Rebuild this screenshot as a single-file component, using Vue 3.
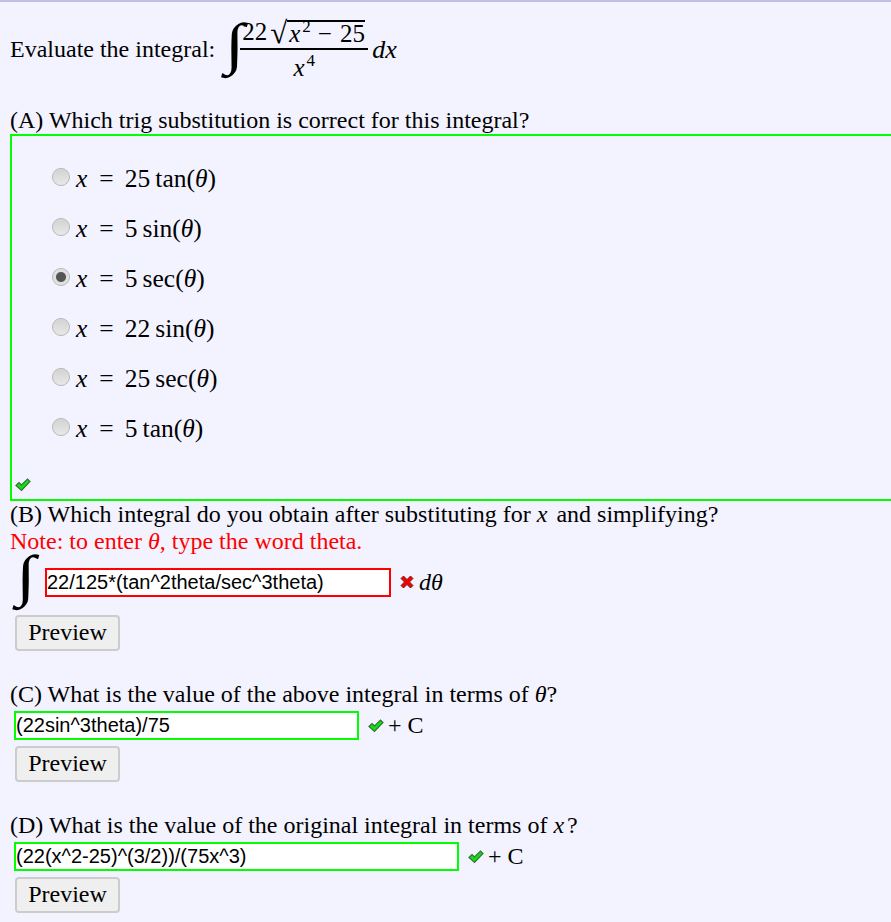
<template>
  <div class="page">
    <div class="intro">
      <span>Evaluate the integral:</span>
      <span class="big-int">∫</span>
      <span class="frac">
        <span class="num">22<span class="radical">√</span><span class="radicand"><i>x</i><sup>2</sup><span class="minus">−</span>25</span></span>
        <span class="den"><i>x</i><sup>4</sup></span>
      </span>
      <span class="dx"><i>dx</i></span>
    </div>

    <div class="q-a">(A) Which trig substitution is correct for this integral?</div>
    <div class="choices">
      <label v-for="c in choices" :key="c.text" class="choice">
        <input type="radio" name="sub" :checked="c.on" />
        <span class="math"><i>x</i><span class="eq">=</span>{{ c.text }}(<i>θ</i>)</span>
      </label>
      <svg class="mark box-mark" viewBox="0 0 16 14"><path :d="checkPath" class="check" /></svg>
    </div>

    <div class="q-b">(B) Which integral do you obtain after substituting for <i class="mi">x</i> and simplifying?</div>
    <div class="note">Note: to enter <i>θ</i>, type the word theta.</div>
    <div class="answer-b">
      <span class="small-int">∫</span>
      <input class="field bad wide-b" value="22/125*(tan^2theta/sec^3theta)" />
      <svg class="mark" viewBox="0 0 14 14"><path :d="crossPath" class="cross" /></svg>
      <span class="tail"><i>dθ</i></span>
    </div>
    <button class="preview">Preview</button>

    <div class="q-c">(C) What is the value of the above integral in terms of <i>θ</i>?</div>
    <div class="answer">
      <input class="field good wide-c" value="(22sin^3theta)/75" />
      <svg class="mark" viewBox="0 0 16 14"><path :d="checkPath" class="check" /></svg>
      <span class="tail">+ C</span>
    </div>
    <button class="preview">Preview</button>

    <div class="q-c">(D) What is the value of the original integral in terms of <i class="mi">x</i>?</div>
    <div class="answer">
      <input class="field good wide-d" value="(22(x^2-25)^(3/2))/(75x^3)" />
      <svg class="mark" viewBox="0 0 16 14"><path :d="checkPath" class="check" /></svg>
      <span class="tail">+ C</span>
    </div>
    <button class="preview">Preview</button>
  </div>
</template>

<script setup>
const choices = [
  { text: '25\u2009tan' },
  { text: '5\u2009sin' },
  { text: '5\u2009sec', on: true },
  { text: '22\u2009sin' },
  { text: '25\u2009sec' },
  { text: '5\u2009tan' }
];

const checkPath = 'M1 7.5 L4 4.5 L6.5 7 L12.5 1 L15 3.5 L6.5 12.5 Z';
const crossPath = 'M1 3.5 L3.5 1 L7 4.5 L10.5 1 L13 3.5 L9.5 7 L13 10.5 L10.5 13 L7 9.5 L3.5 13 L1 10.5 L4.5 7 Z';
</script>

<style>
html, body {
  margin: 0;
  background: #f3f3ff;
  overflow: hidden;
}
</style>

<style scoped>
.page {
  width: 891px;
  height: 922px;
  box-sizing: border-box;
  border-top: 2px solid #bfbfe0;
  padding-left: 10px;
  overflow: hidden;
  font-family: "Liberation Serif", serif;
  font-size: 24px;
  line-height: 27px;
  color: #000;
}

.intro {
  display: flex;
  align-items: center;
  height: 81px;
  padding-top: 14px;
  box-sizing: border-box;
}

.big-int {
  font-size: 62px;
  line-height: 62px;
  width: 16px;
  margin: 0 0 0 9px;
  transform: translate(2px, -6px) scale(1.15, 0.92);
}

.frac {
  display: inline-flex;
  flex-direction: column;
  align-items: center;
  width: 128px;
  font-size: 25px;
}

.num {
  display: flex;
  align-items: flex-end;
  align-self: stretch;
  height: 32px;
  box-sizing: border-box;
  padding: 0 0 3px 2px;
  border-bottom: 2px solid #000;
  margin-bottom: 2px;
}

.radical {
  font-size: 31px;
  line-height: 26px;
  width: 17px;
  margin-left: 3px;
  transform: translateY(1px);
}

.radicand {
  border-top: 2px solid #000;
  line-height: 23px;
  margin-top: -2px;
  padding-left: 2px;
  white-space: nowrap;
}

.radicand sup, .den sup {
  font-size: 17px;
  line-height: 0;
  margin-left: 2px;
}

.minus {
  margin: 0 8px 0 7px;
}

.den {
  line-height: 28px;
  margin-top: 2px;
}

.dx {
  margin-left: 4px;
  font-size: 26px;
}

.q-a {
  margin-top: 24px;
}

.choices {
  width: 1000px;
  height: 367px;
  box-sizing: border-box;
  border: 2px solid #00ff00;
  padding: 16px 0 0 40px;
  position: relative;
}

.choice {
  display: flex;
  align-items: center;
  height: 50px;
}

.choice input {
  appearance: none;
  width: 18px;
  height: 18px;
  margin: 0 6px 0 0;
  border: 1.5px solid #b4b4b4;
  border-radius: 50%;
  background: linear-gradient(#d2d2d2, #e8e8e8);
  box-shadow: inset 0 0 1px #fff;
}

.choice input:checked {
  background: radial-gradient(circle, #555 0, #555 4.5px, #e0e0e0 5.5px);
}

.math {
  font-size: 25.5px;
  padding-top: 3px;
}

.mi {
  padding-right: 3px;
}

.eq {
  margin: 0 11px 0 12px;
}

.mark {
  width: 16px;
  height: 14px;
  flex: none;
}

.box-mark {
  position: absolute;
  left: 3px;
  bottom: 7px;
}

.check {
  fill: #0fe00f;
  stroke: #38703a;
  stroke-width: 1.2;
}

.cross {
  fill: #f00000;
  stroke: #7a2020;
  stroke-width: 1;
}

.note {
  color: #ff0000;
}

.answer-b {
  display: flex;
  align-items: center;
  height: 54px;
}

.small-int {
  font-size: 62px;
  line-height: 50px;
  width: 35px;
  flex: none;
  transform: translate(6px, -6px) scale(1.15, 0.92);
  transform-origin: left center;
}

.answer {
  display: flex;
  align-items: center;
  height: 31px;
  margin-top: 2px;
}

.field {
  box-sizing: border-box;
  height: 29px;
  border: 2px solid;
  padding: 0;
  font-family: "Liberation Sans", sans-serif;
  font-size: 20px;
  background: #fff;
  color: #000;
  outline: none;
  flex: none;
}

.good {
  border-color: #00ff00;
}

.bad {
  border-color: #ff0000;
}

.wide-b {
  width: 346px;
  margin-right: 8px;
}

.wide-c {
  width: 345px;
  margin: 0 9px 0 4px;
}

.wide-d {
  width: 445px;
  margin: 0 9px 0 4px;
}

.tail {
  margin-left: 4px;
}

.preview {
  display: block;
  width: 105px;
  height: 36px;
  margin: 5px 0 0 5px;
  padding: 0 0 2px;
  box-sizing: border-box;
  border: 2px solid #ccc;
  border-radius: 4px;
  background: #efefef;
  font-family: "Liberation Serif", serif;
  font-size: 24px;
  color: #000;
}

.answer-b + .preview {
  margin-top: 6px;
}

.q-c {
  margin-top: 30px;
}
</style>
